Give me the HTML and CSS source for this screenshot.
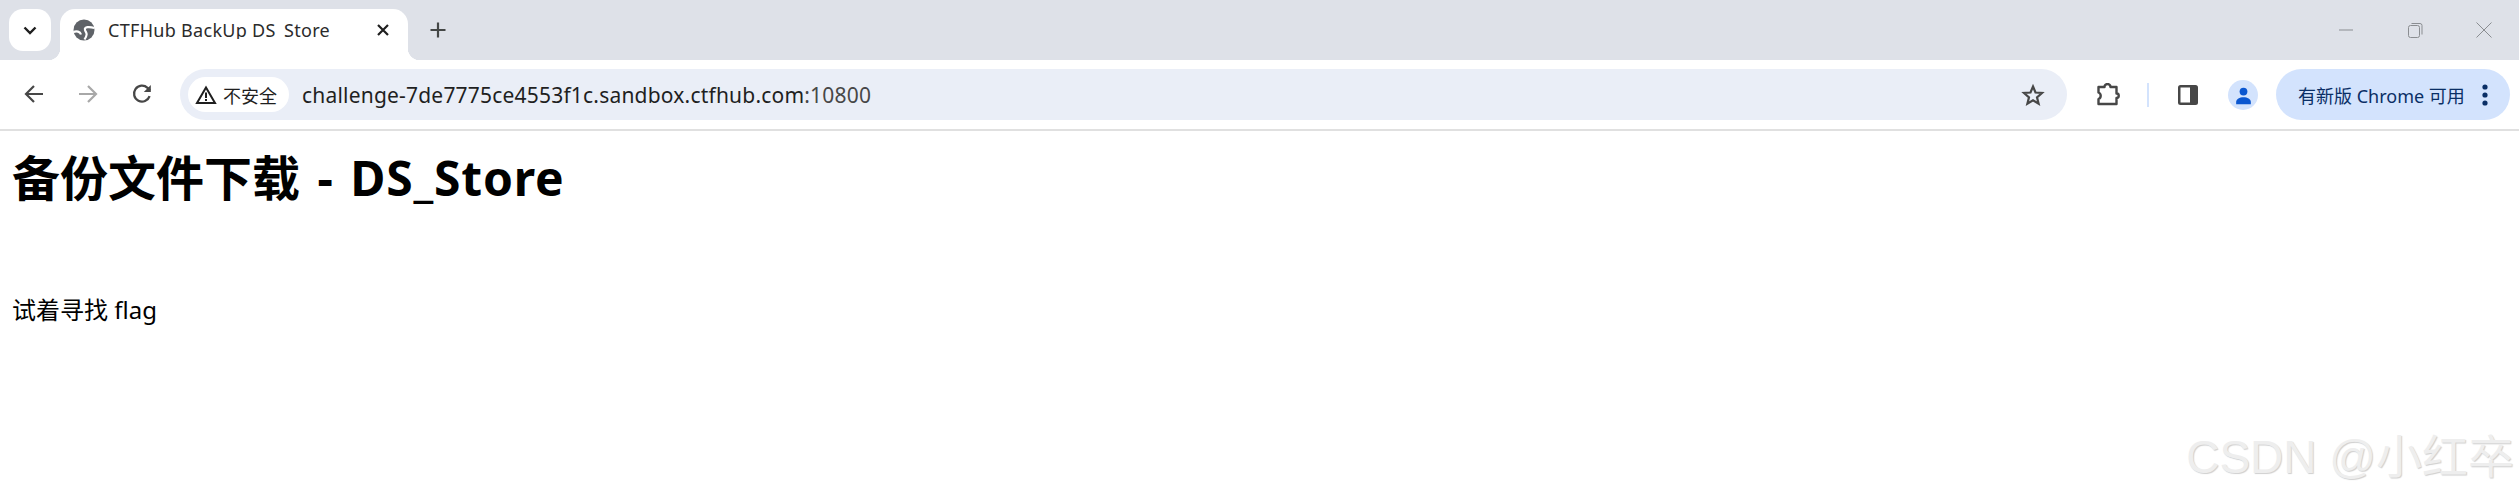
FILE: index.html
```html
<!DOCTYPE html>
<html lang="zh-CN">
<head>
  <meta charset="UTF-8">
  <title>CTFHub BackUp DS_Store</title>
  <link rel="stylesheet" href="styles.css">
</head>
<body>
  <div class="browser">
    <div class="tabstrip">
      <div class="tab-search">
        <svg width="18" height="18" viewBox="0 0 18 18"><path d="M3.500 6.500 9 12l5.500-5.500" fill="none" stroke="#1f1f1f" stroke-width="2.400"/></svg>
      </div>
      <div class="tab">
        <svg class="favicon" width="22" height="22" viewBox="0 0 22 22">
          <circle cx="11" cy="11" r="10.500" fill="#5f6368"/>
          <path d="M21.500 9C16.500 7.500 11 7.500 12 11c.8 3 3.500 3-.5 9.500M.5 13c3-1.200 6.500-.5 7.500 2.500" fill="none" stroke="#fff" stroke-width="2.200"/>
        </svg>
        <span class="tab-title">CTFHub BackUp DS_Store</span>
        <svg class="tab-close" width="14" height="14" viewBox="0 0 14 14"><path d="M2 2l10 10M12 2 2 12" stroke="#1f1f1f" stroke-width="2.200"/></svg>
      </div>
      <svg class="new-tab" width="16" height="16" viewBox="0 0 16 16"><path d="M8 .5v15M.5 8h15" stroke="#444746" stroke-width="2.200"/></svg>
      <div class="window-controls">
        <svg width="16" height="16" viewBox="0 0 16 16"><path d="M1 8h14" stroke="#8a8d91" stroke-width="1"/></svg>
        <svg width="16" height="16" viewBox="0 0 16 16" fill="none" stroke="#8a8d91"><rect x="1.500" y="3.500" width="11" height="12" rx="2"/><path d="M4.500 1.500h8.500a2 2 0 0 1 2 2v9"/></svg>
        <svg width="16" height="16" viewBox="0 0 16 16"><path d="M.5.500l15 15M15.500.500l-15 15" stroke="#8a8d91" stroke-width="1"/></svg>
      </div>
    </div>

    <div class="toolbar">
      <div class="nav-buttons">
        <svg width="20" height="20" viewBox="0 0 20 20" fill="none" stroke="#474747" stroke-width="2.200"><path d="M19 10H2M10 2l-8 8 8 8"/></svg>
        <svg width="20" height="20" viewBox="0 0 20 20" fill="none" stroke="#a8a8a8" stroke-width="2.200"><path d="M1 10h17M10 2l8 8-8 8"/></svg>
        <svg width="20" height="20" viewBox="0 0 20 20" fill="none" stroke="#474747" stroke-width="2.300"><path d="M17.600 12.200A8 8 0 1 1 15.500 3.800L18 6.500"/><path d="M18.800 1v7h-7" fill="#474747" stroke="none"/></svg>
      </div>
      <div class="omnibox">
        <div class="security-chip">
          <svg width="22" height="20" viewBox="0 0 22 20"><path d="M11 2.500 20 18H2Z" fill="none" stroke="#1f1f1f" stroke-width="2"/><path d="M10 7.500h2v5.500h-2zM10 14h2v2h-2z" fill="#1f1f1f"/></svg>
          <span>不安全</span>
        </div>
        <div class="url">challenge-7de7775ce4553f1c.sandbox.ctfhub.com<span class="url-port">:10800</span></div>
        <svg class="star" width="24" height="24" viewBox="0 0 24 24"><path d="M12 3.500l2.500 6 6.500.5-5 4.300 1.600 6.400L12 17.300l-5.600 3.400L8 14.300 3 10l6.500-.5Z" fill="none" stroke="#474747" stroke-width="2.200" stroke-linejoin="miter"/></svg>
      </div>
      <svg class="ext-icon" width="26" height="24" viewBox="0 0 26 24"><path d="M2.500 4h6a3 3 0 0 1 6 0h6v6.500a2.200 2.200 0 0 1 0 4.500V21H2.500v-5a3.500 3.500 0 0 0 0-6.500Z" fill="none" stroke="#474747" stroke-width="2.400" stroke-linejoin="round"/></svg>
      <div class="toolbar-sep"></div>
      <svg class="side-icon" width="22" height="22" viewBox="0 0 22 22"><rect x="1" y="1" width="20" height="20" rx="2.500" fill="#474747"/><rect x="3.500" y="3.500" width="9.500" height="15" fill="#fff"/></svg>
      <div class="avatar">
        <svg width="22" height="22" viewBox="0 0 22 22"><circle cx="11" cy="6.500" r="4.500" fill="#0b57d0"/><path d="M2.500 21v-2.500c0-3.500 4-5.500 8.500-5.500s8.500 2 8.500 5.500V21Z" fill="#0b57d0"/></svg>
      </div>
      <div class="update-pill">
        <span>有新版 Chrome 可用</span>
        <svg width="6" height="22" viewBox="0 0 6 22"><circle cx="3" cy="3" r="2.600" fill="#0a2f66"/><circle cx="3" cy="11" r="2.600" fill="#0a2f66"/><circle cx="3" cy="19" r="2.600" fill="#0a2f66"/></svg>
      </div>
    </div>

    <div class="page">
      <h1>备份文件下载 - <span class="h1-latin">DS_Store</span></h1>
      <p>试着寻找 flag</p>
      <div class="watermark">CSDN @小红卒</div>
    </div>
  </div>
</body>
</html>
```

FILE: styles.css
```css
* {
  box-sizing: border-box;
}
html, body {
  margin: 0;
  height: 100%;
  overflow: hidden;
}
body {
  background-color: white;
  color: black;
  font-family: "Noto Sans", "Noto Sans CJK SC", sans-serif;
}
.browser {
  display: flex;
  flex-direction: column;
  height: 100%;
}
.tabstrip {
  background-color: #dee1e8;
  height: 60px;
  display: flex;
  align-items: flex-start;
  padding: 9px 0 0 9px;
  flex-shrink: 0;
}
.tab-search {
  width: 42px;
  height: 42px;
  background-color: white;
  border-radius: 14px;
  display: flex;
  align-items: center;
  justify-content: center;
}
.tab {
  position: relative;
  margin-left: 9px;
  width: 348px;
  height: 51px;
  background-color: white;
  border-radius: 15px 15px 0 0;
  display: flex;
  align-items: center;
  padding: 0 18px 9px 13px;
}
.tab::before,
.tab::after {
  content: "";
  position: absolute;
  bottom: 0;
  width: 12px;
  height: 12px;
}
.tab::before {
  left: -12px;
  background: radial-gradient(circle at 0 0, #dee1e8 12px, white 12.500px);
}
.tab::after {
  right: -12px;
  background: radial-gradient(circle at 100% 0, #dee1e8 12px, white 12.500px);
}
.favicon {
  flex-shrink: 0;
}
.tab-title {
  margin-left: 13px;
  font-size: 18px;
  line-height: 24px;
  color: #2b2b2b;
  white-space: nowrap;
  flex: 1;
  letter-spacing: 0.3px;
  clip-path: inset(0 0 3px 0);
}
.new-tab {
  margin: 13px 0 0 22px;
}
.window-controls {
  margin-left: auto;
  margin-top: 13px;
  width: 181px;
  padding-right: 27px;
  display: flex;
  justify-content: space-between;
}
.toolbar {
  background-color: white;
  height: 71px;
  border-bottom: 2px solid #e0e0e0;
  display: flex;
  align-items: flex-start;
  padding-top: 9px;
  flex-shrink: 0;
  position: relative;
  border-radius: 12px 12px 0 0;
}
.nav-buttons {
  width: 180px;
  padding: 15px 0 0 24px;
  display: flex;
  gap: 34px;
  flex-shrink: 0;
}
.omnibox {
  width: 1887px;
  height: 51px;
  background-color: #eaeef7;
  border-radius: 26px;
  display: flex;
  align-items: center;
  padding: 0 22px 0 8px;
  flex-shrink: 0;
}
.security-chip {
  width: 101px;
  height: 35px;
  background-color: white;
  border-radius: 18px;
  display: flex;
  align-items: center;
  padding-left: 7px;
  gap: 6px;
  font-size: 18px;
  color: #1f1f1f;
  flex-shrink: 0;
}
.url {
  margin-left: 13px;
  font-size: 21px;
  color: #1f1f1f;
  flex: 1;
  white-space: nowrap;
  letter-spacing: 0.2px;
}
.url-port {
  color: #474747;
}
.ext-icon {
  margin: 14px 0 0 29px;
  flex-shrink: 0;
}
.toolbar-sep {
  width: 2px;
  height: 24px;
  margin: 14px 0 0 25px;
  background-color: #d3e3fd;
  flex-shrink: 0;
}
.side-icon {
  margin: 15px 0 0 28px;
  flex-shrink: 0;
}
.avatar {
  width: 30px;
  height: 30px;
  margin: 11px 0 0 29px;
  border-radius: 50%;
  background-color: #d3e3fd;
  display: flex;
  align-items: center;
  justify-content: center;
  flex-shrink: 0;
}
.avatar svg {
  width: 19px;
  height: 19px;
}
.update-pill {
  width: 234px;
  height: 51px;
  margin-left: 18px;
  background-color: #d3e3fd;
  border-radius: 26px;
  display: flex;
  align-items: center;
  justify-content: space-between;
  padding: 0 22px;
  font-size: 18px;
  color: #0a2f66;
  white-space: nowrap;
  flex-shrink: 0;
}
.page {
  flex: 1;
  position: relative;
  padding: 0 12px;
}
h1 {
  font-size: 48px;
  font-weight: bold;
  margin: 15px 0 0;
  line-height: 64px;
  word-spacing: 5px;
}
.h1-latin {
  letter-spacing: 0.8px;
}
p {
  font-size: 24px;
  line-height: 32px;
  margin: 84px 0 0;
}
.watermark {
  position: absolute;
  right: 5px;
  bottom: 15px;
  font-family: "Liberation Sans", "Noto Sans CJK SC", sans-serif;
  font-size: 46px;
  color: #eeeeee;
  text-shadow: 1px 1px 1px #cfcfcf;
}
```
